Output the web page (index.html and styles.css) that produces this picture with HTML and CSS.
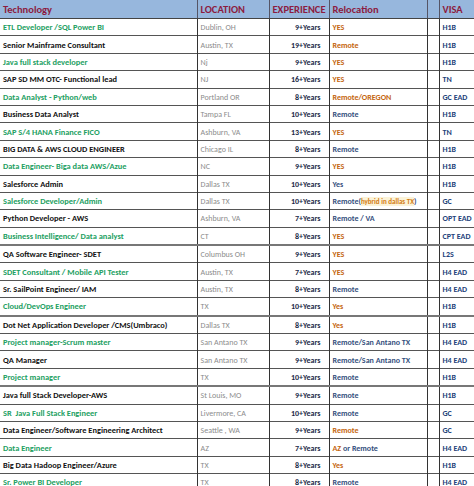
FILE: index.html
```html
<!DOCTYPE html>
<html>
<head>
<meta charset="utf-8">
<link rel="stylesheet" href="styles.css">
</head>
<body>
<table class="sheet">
<colgroup>
<col class="c-tech"><col class="c-loc"><col class="c-exp"><col class="c-rel"><col class="c-gap"><col class="c-visa">
</colgroup>
<thead>
<tr><th>Technology</th><th>LOCATION</th><th>EXPERIENCE</th><th>Relocation</th><th></th><th>VISA</th></tr>
</thead>
<tbody>
<tr><td class="g">ETL Developer /SQL Power BI</td><td class="loc">Dublin, OH</td><td class="exp">9+Years</td><td class="o">YES</td><td></td><td class="visa">H1B</td></tr>
<tr><td class="k">Senior Mainframe Consultant</td><td class="loc">Austin, TX</td><td class="exp">19+Years</td><td class="o">Remote</td><td></td><td class="visa">H1B</td></tr>
<tr><td class="g">Java full stack developer</td><td class="loc">Nj</td><td class="exp">9+Years</td><td class="o">YES</td><td></td><td class="visa">H1B</td></tr>
<tr><td class="k">SAP SD MM OTC- Functional lead</td><td class="loc">NJ</td><td class="exp">16+Years</td><td class="o">YES</td><td></td><td class="visa">TN</td></tr>
<tr><td class="g">Data Analyst - Python/web</td><td class="loc">Portland OR</td><td class="exp">8+Years</td><td class="o">Remote/OREGON</td><td></td><td class="visa">GC EAD</td></tr>
<tr><td class="k">Business Data Analyst</td><td class="loc">Tampa FL</td><td class="exp">10+Years</td><td class="n">Remote</td><td></td><td class="visa">H1B</td></tr>
<tr><td class="g">SAP S/4 HANA Finance FICO</td><td class="loc">Ashburn, VA</td><td class="exp">13+Years</td><td class="o">YES</td><td></td><td class="visa">TN</td></tr>
<tr><td class="k">BIG DATA &amp; AWS CLOUD ENGINEER</td><td class="loc">Chicago IL</td><td class="exp">8+Years</td><td class="n">Remote</td><td></td><td class="visa">H1B</td></tr>
<tr><td class="g">Data Engineer- Biga data AWS/Azue</td><td class="loc">NC</td><td class="exp">9+Years</td><td class="o">YES</td><td></td><td class="visa">H1B</td></tr>
<tr><td class="k">Salesforce Admin</td><td class="loc">Dallas TX</td><td class="exp">10+Years</td><td class="n">Yes</td><td></td><td class="visa">H1B</td></tr>
<tr><td class="g">Salesforce Developer/Admin</td><td class="loc">Dallas TX</td><td class="exp">10+Years</td><td class="n">Remote(<span class="hy">hybrid in dallas TX</span>)</td><td></td><td class="visa">GC</td></tr>
<tr><td class="k">Python Developer - AWS</td><td class="loc">Ashburn, VA</td><td class="exp">7+Years</td><td class="n">Remote / VA</td><td></td><td class="visa">OPT EAD</td></tr>
<tr><td class="g">Business Intelligence/ Data analyst</td><td class="loc">CT</td><td class="exp">8+Years</td><td class="o">YES</td><td></td><td class="visa">CPT EAD</td></tr>
<tr class="thick"><td class="k">QA Software Engineer- SDET</td><td class="loc">Columbus OH</td><td class="exp">9+Years</td><td class="o">YES</td><td></td><td class="visa">L2S</td></tr>
<tr><td class="g">SDET Consultant / Mobile API Tester</td><td class="loc">Austin, TX</td><td class="exp">7+Years</td><td class="o">YES</td><td></td><td class="visa">H4 EAD</td></tr>
<tr><td class="k">Sr. SailPoint Engineer/ IAM</td><td class="loc">Austin, TX</td><td class="exp">8+Years</td><td class="n">Remote</td><td></td><td class="visa">H4 EAD</td></tr>
<tr><td class="g">Cloud/DevOps Engineer</td><td class="loc">TX</td><td class="exp">10+Years</td><td class="o">Yes</td><td></td><td class="visa">H1B</td></tr>
<tr class="thick"><td class="k">Dot Net Application Developer /CMS(Umbraco)</td><td class="loc">Dallas TX</td><td class="exp">8+Years</td><td class="o">Yes</td><td></td><td class="visa">H1B</td></tr>
<tr><td class="g">Project manager-Scrum master</td><td class="loc">San Antano TX</td><td class="exp">9+Years</td><td class="n">Remote/San Antano TX</td><td></td><td class="visa">H4 EAD</td></tr>
<tr><td class="k">QA Manager</td><td class="loc">San Antano TX</td><td class="exp">9+Years</td><td class="n">Remote/San Antano TX</td><td></td><td class="visa">H4 EAD</td></tr>
<tr><td class="g">Project manager</td><td class="loc">TX</td><td class="exp">10+Years</td><td class="n">Remote</td><td></td><td class="visa">H1B</td></tr>
<tr class="thick"><td class="k">Java full Stack Developer-AWS</td><td class="loc">St Louis, MO</td><td class="exp">9+Years</td><td class="n">Remote</td><td></td><td class="visa">H1B</td></tr>
<tr><td class="g">SR&nbsp; Java Full Stack Engineer</td><td class="loc">Livermore, CA</td><td class="exp">10+Years</td><td class="n">Remote</td><td></td><td class="visa">GC</td></tr>
<tr><td class="k">Data Engineer/Software Engineering Architect</td><td class="loc">Seattle , WA</td><td class="exp">9+Years</td><td class="o">Remote</td><td></td><td class="visa">GC</td></tr>
<tr><td class="g">Data Engineer</td><td class="loc">AZ</td><td class="exp">7+Years</td><td class="n"><span class="az">AZ</span> or Remote</td><td></td><td class="visa">H4 EAD</td></tr>
<tr><td class="k">Big Data Hadoop Engineer/Azure</td><td class="loc">TX</td><td class="exp">8+Years</td><td class="o">Yes</td><td></td><td class="visa">H1B</td></tr>
<tr class="last"><td class="g">Sr. Power BI Developer</td><td class="loc">TX</td><td class="exp">8+Years</td><td class="n">Remote</td><td></td><td class="visa">H4 EAD</td></tr>
</tbody>
</table>
</body>
</html>
```

FILE: styles.css
```css
html, body {
  margin: 0;
  padding: 0;
  background: #ffffff;
}

.sheet {
  width: 474px;
  border-collapse: collapse;
  table-layout: fixed;
  font-family: Carlito, "Open Sans", "Liberation Sans", sans-serif;
  font-size: 8px;
}

.c-tech { width: 197px; }
.c-loc { width: 72px; }
.c-exp { width: 60px; }
.c-rel { width: 98px; }
.c-gap { width: 12px; }
.c-visa { width: 35px; }

.sheet th {
  height: 18px;
  padding: 0 0 0 3px;
  background: #97b7dd;
  color: #8c1c40;
  font-size: 10.5px;
  font-weight: 700;
  text-align: left;
  border-left: 1px solid #556;
  border-bottom: 1px solid #444;
  white-space: nowrap;
  overflow: hidden;
}

.sheet th:first-child { border-left: none; }

.sheet td {
  height: 16.4px;
  padding: 0 0 0 3px;
  border-top: 1px solid #555;
  border-left: 1px solid #333;
  white-space: nowrap;
  overflow: hidden;
  font-weight: 600;
}

.sheet td:first-child {
  border-left: none;
  font-size: 8.4px;
}

.sheet tr.thick td { border-top: 2px solid #777; }
.sheet tr.last td { border-bottom: 2px solid #555; }

.g { color: #22a062; }
.k { color: #111111; }

.loc {
  color: #8c8c8c;
  font-weight: 400 !important;
}

.exp {
  color: #1c2a48;
  text-align: right;
  padding-right: 8px !important;
}

.o { color: #c4650e; }
.n { color: #35507e; }

.hy {
  color: #d37a10;
  font-size: 7px;
  background: #fbf3d8;
}

.az { color: #c4650e; }

.visa { color: #23427a; }
```
